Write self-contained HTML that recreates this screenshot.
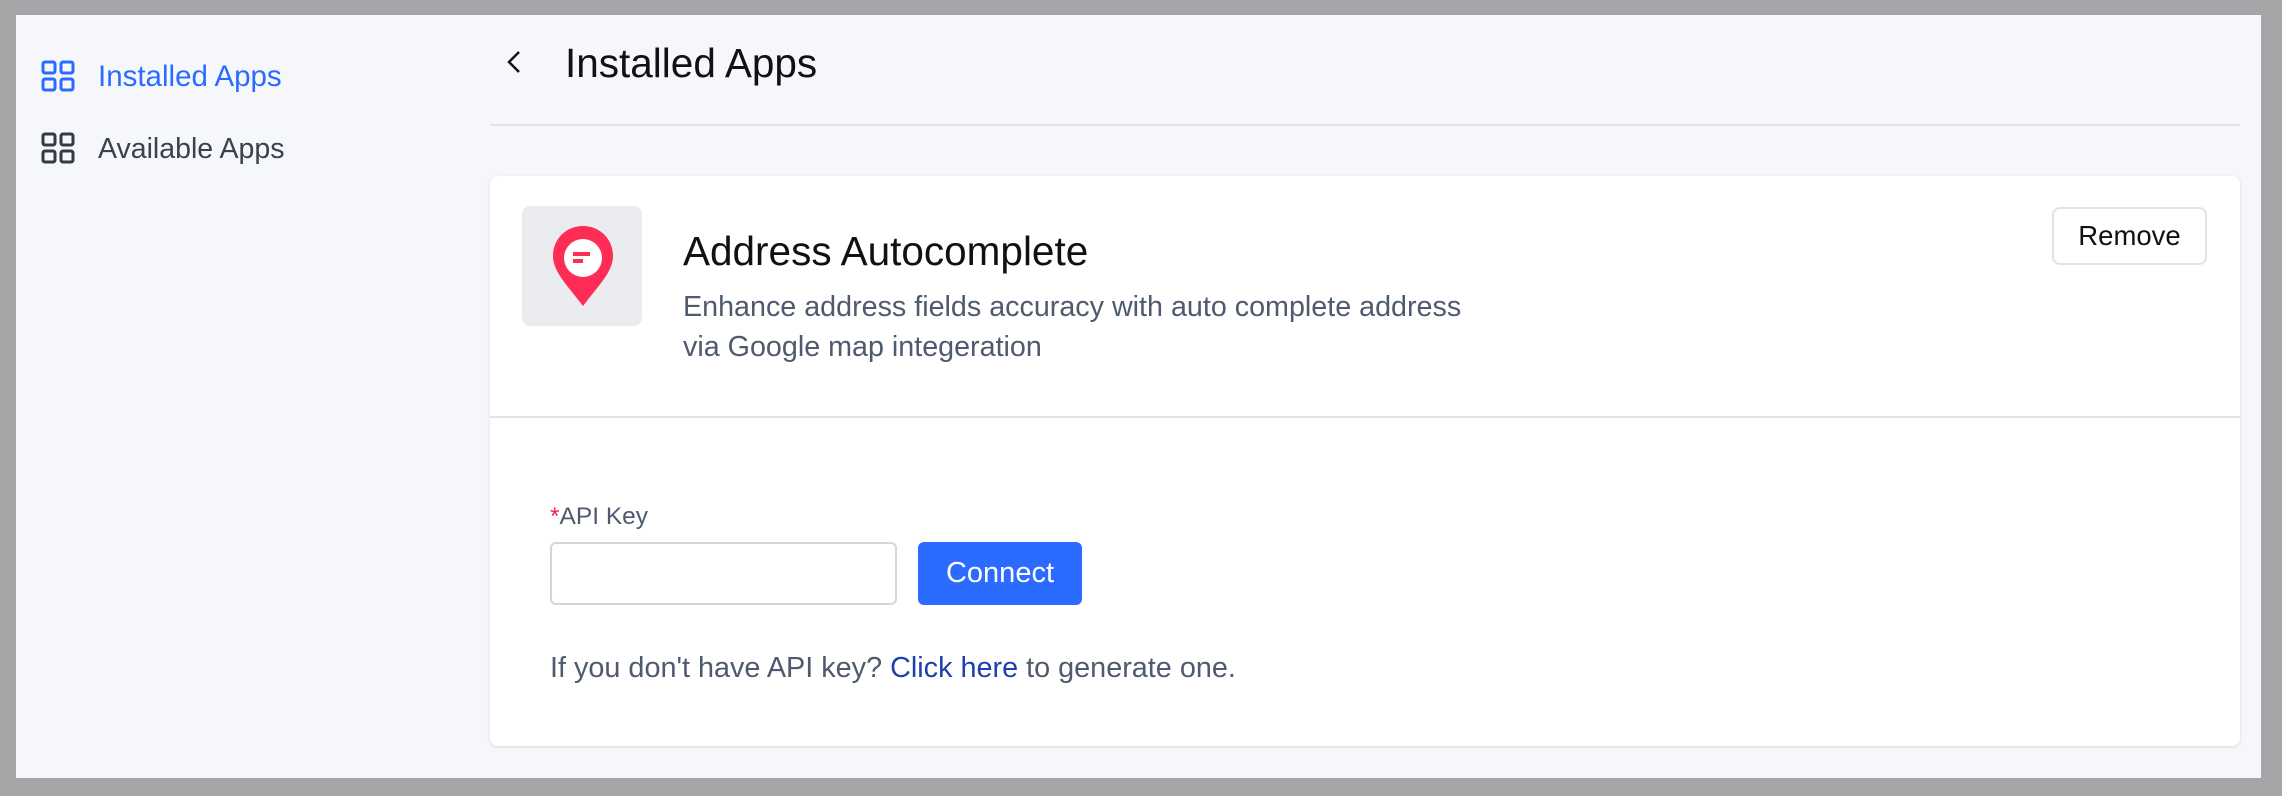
<!DOCTYPE html>
<html><head><meta charset="utf-8"><style>
*{box-sizing:border-box;margin:0;padding:0}
body{width:2282px;height:796px;background:#a5a6a8;font-family:"Liberation Sans",sans-serif;position:relative;overflow:hidden}
.page{position:absolute;left:16px;top:15px;width:2245px;height:763px;background:#f6f7fb}
.abs{position:absolute;white-space:nowrap}
.card{position:absolute;left:490px;top:176px;width:1750px;height:570px;background:#fff;border-radius:8px;box-shadow:0 1px 3px rgba(0,0,0,.12)}
</style></head><body>
<div class="page"></div>
<svg class="abs" style="left:41px;top:60px" width="34" height="32" viewBox="0 0 34 32" fill="none" stroke="#2b6bff" stroke-width="3"><rect x="2" y="2" width="12" height="11" rx="2"/><rect x="20" y="2" width="12" height="11" rx="2"/><rect x="2" y="19" width="12" height="11" rx="2"/><rect x="20" y="19" width="12" height="11" rx="2"/></svg>
<div class="abs" style="left:98px;top:60px;font-size:29.5px;color:#2b6bff">Installed Apps</div>
<svg class="abs" style="left:41px;top:132px" width="34" height="32" viewBox="0 0 34 32" fill="none" stroke="#333a46" stroke-width="3"><rect x="2" y="2" width="12" height="11" rx="2"/><rect x="20" y="2" width="12" height="11" rx="2"/><rect x="2" y="19" width="12" height="11" rx="2"/><rect x="20" y="19" width="12" height="11" rx="2"/></svg>
<div class="abs" style="left:98px;top:133px;font-size:28.5px;color:#3a4150">Available Apps</div>
<svg class="abs" style="left:505px;top:50px" width="18" height="24" viewBox="0 0 18 24" fill="none" stroke="#111" stroke-width="2.5"><path d="M14 2 L4 12 L14 22"/></svg>
<div class="abs" style="left:565px;top:40px;font-size:40.5px;color:#111">Installed Apps</div>
<div class="abs" style="left:490px;top:124px;width:1750px;height:2px;background:#e2e3e8"></div>
<div class="card"></div>
<div class="abs" style="left:522px;top:206px;width:120px;height:120px;background:#ebecf0;border-radius:8px"></div>
<svg class="abs" style="left:550px;top:224px" width="66" height="84" viewBox="0 0 66 84"><path d="M33 2 C16 2 3 15 3 32 C3 48 18 62 33 82 C48 62 63 48 63 32 C63 15 50 2 33 2Z" fill="#ff2d55"/><circle cx="33" cy="34" r="19" fill="#fff"/><rect x="23" y="28" width="17" height="4" fill="#ff2d55"/><rect x="23" y="35" width="10" height="4" fill="#ff2d55"/></svg>
<div class="abs" style="left:683px;top:228px;font-size:40.5px;color:#111">Address Autocomplete</div>
<div class="abs" style="left:683px;top:287px;font-size:28.7px;line-height:40px;color:#4f5a6e">Enhance address fields accuracy with auto complete address<br>via Google map integeration</div>
<div class="abs" style="left:2052px;top:207px;width:155px;height:58px;border:2px solid #e2e3e8;border-radius:8px;font-size:27.5px;color:#111;text-align:center;line-height:54px">Remove</div>
<div class="abs" style="left:490px;top:416px;width:1750px;height:2px;background:#e2e3e8"></div>
<div class="abs" style="left:550px;top:503px;font-size:24.5px;color:#4f5a6e"><span style="color:#e8264a">*</span>API Key</div>
<div class="abs" style="left:550px;top:542px;width:347px;height:63px;border:2px solid #d3d6dc;border-radius:6px;background:#fff"></div>
<div class="abs" style="left:918px;top:542px;width:164px;height:63px;background:#2b6bff;border-radius:6px;color:#fff;font-size:29px;text-align:center;line-height:63px">Connect</div>
<div class="abs" style="left:550px;top:652px;font-size:28.8px;color:#4f5a6e">If you don't have API key? <span style="color:#1f3fae">Click here</span> to generate one.</div>
</body></html>
